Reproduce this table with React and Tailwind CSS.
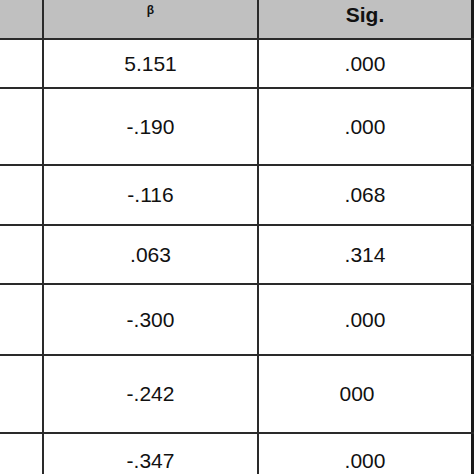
export default function App() {
  const rows = [
    { h: "h-[49px]", b: "5.151", s: ".000" },
    { h: "h-[77px]", b: "-.190", s: ".000" },
    { h: "h-[60px]", b: "-.116", s: ".068" },
    { h: "h-[59px]", b: ".063", s: ".314" },
    { h: "h-[71px]", b: "-.300", s: ".000" },
    { h: "h-[78px]", b: "-.242", s: "000", shift: true },
    { h: "h-[56px]", b: "-.347", s: ".000" },
  ];
  return (
    <div
      className="w-[474px] h-[474px] overflow-hidden bg-white text-[#111]"
      style={{ fontFamily: '"Liberation Sans", Arial, sans-serif' }}
    >
      <div className="flex h-[40px] bg-[#c0c0c0] border-b-2 border-[#2a2a2a]">
        <div className="w-[44px] border-r-2 border-[#2a2a2a]" />
        <div className="w-[215px] border-r-2 border-[#2a2a2a] flex justify-center pt-[2px]">
          <span className="text-[12px] font-bold leading-[16px]">β</span>
        </div>
        <div className="w-[215px] border-r-[3px] border-[#1a1a1a] flex justify-center pt-[3px]">
          <span className="text-[21px] font-bold leading-[24px]">Sig.</span>
        </div>
      </div>
      {rows.map((r, i) => (
        <div key={i} className={`flex shrink-0 ${r.h} border-b-2 border-[#2a2a2a]`}>
          <div className="w-[44px] border-r-2 border-[#2a2a2a]" />
          <div className="w-[215px] border-r-2 border-[#2a2a2a] flex items-center justify-center">
            <span className="text-[21px] leading-[24px]">{r.b}</span>
          </div>
          <div
            className={`w-[215px] border-r-[3px] border-[#1a1a1a] flex items-center justify-center ${
              r.shift ? "pr-[16px]" : ""
            }`}
          >
            <span className="text-[21px] leading-[24px]">{r.s}</span>
          </div>
        </div>
      ))}
    </div>
  );
}
